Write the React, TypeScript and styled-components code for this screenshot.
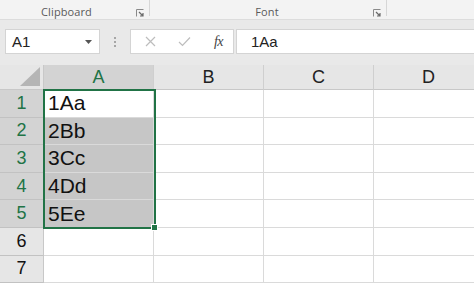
import React from "react";
import styled, { createGlobalStyle } from "styled-components";

const Global = createGlobalStyle`
  html, body { margin: 0; padding: 0; background: #ffffff; overflow: hidden; }
  body { width: 474px; height: 284px; font-family: "Liberation Sans", Arial, sans-serif; }
`;

const Page = styled.div`
  width: 474px;
  height: 284px;
  display: flex;
  flex-direction: column;
  overflow: hidden;
`;

const Ribbon = styled.div`
  height: 20px;
  flex: none;
  background: #f3f3f3;
  border-bottom: 1px solid #dcdcdc;
  display: flex;
  box-sizing: border-box;
`;

const Group = styled.div<{ $w: number }>`
  width: ${(p) => p.$w}px;
  flex: none;
  position: relative;
  display: flex;
  align-items: center;
  justify-content: center;
  border-right: 1px solid #d6d6d6;
  height: 16px;
  box-sizing: border-box;
  padding-top: 6px;
`;

const GroupLabel = styled.span<{ $shift: number }>`
  font-family: "Open Sans", "Noto Sans", sans-serif;
  font-size: 11px;
  color: #5a5a5a;
  margin-left: ${(p) => p.$shift}px;
  letter-spacing: 0.1px;
`;

const Launcher = styled.svg`
  position: absolute;
  right: 5px;
  top: 9px;
`;

const FormulaBar = styled.div`
  height: 45px;
  flex: none;
  background: #e9e9e9;
  display: flex;
  align-items: flex-start;
  padding: 9px 0 0 5px;
  box-sizing: border-box;
`;

const NameBox = styled.div`
  width: 95px;
  height: 25px;
  box-sizing: border-box;
  background: #fff;
  border: 1px solid #d4d4d4;
  display: flex;
  align-items: center;
  justify-content: space-between;
  padding: 0 7px 0 6px;
  font-size: 15px;
  color: #222;
`;

const Dots = styled.div`
  width: 30px;
  height: 25px;
  display: flex;
  flex-direction: column;
  align-items: center;
  justify-content: center;
  gap: 2px;
`;

const Dot = styled.span`
  width: 2px;
  height: 2px;
  background: #a6a6a6;
`;

const ButtonBox = styled.div`
  width: 104px;
  height: 25px;
  box-sizing: border-box;
  background: #fff;
  border: 1px solid #d4d4d4;
  display: flex;
  align-items: center;
  justify-content: space-between;
  padding: 0 10px 0 14px;
`;

const Fx = styled.span`
  font-family: "Liberation Serif", "Times New Roman", serif;
  font-style: italic;
  font-size: 14px;
  color: #444;
  letter-spacing: -0.5px;
`;

const FormulaInput = styled.div`
  flex: 1;
  height: 25px;
  margin-left: 2px;
  box-sizing: border-box;
  background: #fff;
  border: 1px solid #d4d4d4;
  border-right: none;
  display: flex;
  align-items: center;
  padding-left: 14px;
  font-size: 15px;
  color: #222;
`;

const Sheet = styled.div`
  position: relative;
  display: grid;
  grid-template-columns: 44px repeat(4, 110px);
  grid-template-rows: 25px repeat(7, 27.6px);
  flex: none;
`;

const Corner = styled.div`
  background: #e6e6e6;
  border-right: 1px solid #c8c8c8;
  border-bottom: 1px solid #c8c8c8;
  display: flex;
  align-items: flex-end;
  justify-content: flex-end;
  padding: 0 3px 3px 0;
  box-sizing: border-box;
`;

const ColHead = styled.div<{ $sel?: boolean }>`
  background: ${(p) => (p.$sel ? "#d3d3d3" : "#e6e6e6")};
  color: ${(p) => (p.$sel ? "#217346" : "#222")};
  border-right: 1px solid #cfcfcf;
  border-bottom: 1px solid ${(p) => (p.$sel ? "#217346" : "#c8c8c8")};
  box-sizing: border-box;
  display: flex;
  align-items: center;
  justify-content: center;
  font-size: 18px;
`;

const RowHead = styled.div<{ $sel?: boolean }>`
  background: ${(p) => (p.$sel ? "#d3d3d3" : "#e6e6e6")};
  color: ${(p) => (p.$sel ? "#217346" : "#111")};
  border-right: 1px solid ${(p) => (p.$sel ? "#217346" : "#c8c8c8")};
  border-bottom: 1px solid #c2c2c2;
  box-sizing: border-box;
  display: flex;
  align-items: center;
  justify-content: center;
  font-size: 18px;
`;

const Cell = styled.div<{ $fill?: string }>`
  background: ${(p) => p.$fill || "#fff"};
  border-right: 1px solid #dadada;
  border-bottom: 1px solid #dadada;
  box-sizing: border-box;
  display: flex;
  align-items: center;
  padding-left: 4px;
  font-size: 21px;
  color: #111;
`;

const Selection = styled.div`
  position: absolute;
  left: 43px;
  top: 24px;
  width: 113px;
  height: 140px;
  border: 2px solid #217346;
  box-sizing: border-box;
  pointer-events: none;
`;

const Handle = styled.div`
  position: absolute;
  right: -4px;
  bottom: -4px;
  width: 5px;
  height: 5px;
  background: #217346;
  border: 1px solid #fff;
`;

const LauncherIcon = () => (
  <Launcher width="8" height="8" viewBox="0 0 8 8">
    <path d="M0.5 7.5V0.5H7.5" fill="none" stroke="#8a8a8a" strokeWidth="1" />
    <path d="M3 3L7 7M7 4V7H4" fill="none" stroke="#6a6a6a" strokeWidth="1.2" />
  </Launcher>
);

const data = ["1Aa", "2Bb", "3Cc", "4Dd", "5Ee", "", ""];

export default function App() {
  return (
    <Page>
      <Global />
      <Ribbon>
        <Group $w={150}>
          <GroupLabel $shift={-16}>Clipboard</GroupLabel>
          <LauncherIcon />
        </Group>
        <Group $w={237}>
          <GroupLabel $shift={-2}>Font</GroupLabel>
          <LauncherIcon />
        </Group>
      </Ribbon>
      <FormulaBar>
        <NameBox>
          <span>A1</span>
          <svg width="7" height="4" viewBox="0 0 7 4">
            <path d="M0 0H7L3.5 4Z" fill="#555" />
          </svg>
        </NameBox>
        <Dots>
          <Dot />
          <Dot />
          <Dot />
        </Dots>
        <ButtonBox>
          <svg width="11" height="11" viewBox="0 0 11 11">
            <path d="M1 1L10 10M10 1L1 10" stroke="#bdbdbd" strokeWidth="1.2" />
          </svg>
          <svg width="13" height="11" viewBox="0 0 13 11">
            <path d="M1 6L4.5 9.5L12 1.5" fill="none" stroke="#bdbdbd" strokeWidth="1.2" />
          </svg>
          <Fx>fx</Fx>
        </ButtonBox>
        <FormulaInput>1Aa</FormulaInput>
      </FormulaBar>
      <Sheet>
        <Corner>
          <svg width="20" height="19" viewBox="0 0 20 19">
            <path d="M20 0V19H0Z" fill="#b5b5b5" />
          </svg>
        </Corner>
        <ColHead $sel>A</ColHead>
        <ColHead>B</ColHead>
        <ColHead>C</ColHead>
        <ColHead>D</ColHead>
        {data.map((v, i) => {
          const sel = i < 5;
          return (
            <React.Fragment key={i}>
              <RowHead $sel={sel}>{i + 1}</RowHead>
              <Cell $fill={i > 0 && sel ? "#c6c6c6" : undefined}>{v}</Cell>
              <Cell />
              <Cell />
              <Cell />
            </React.Fragment>
          );
        })}
        <Selection>
          <Handle />
        </Selection>
      </Sheet>
    </Page>
  );
}
